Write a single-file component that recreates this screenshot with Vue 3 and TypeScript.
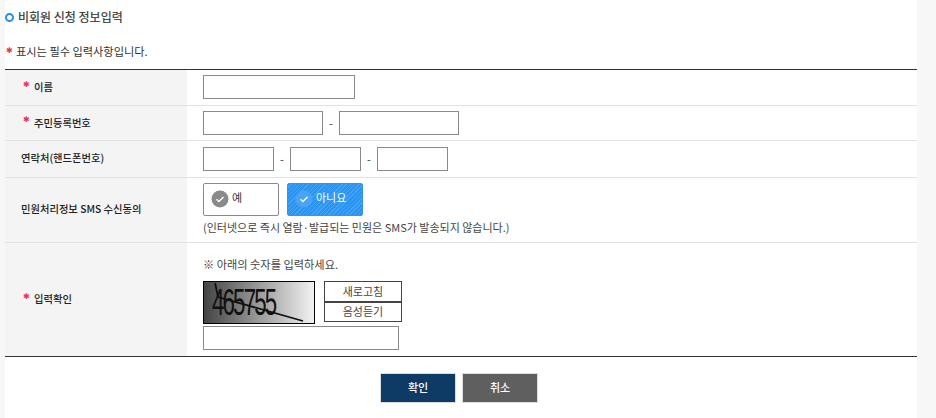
<script setup lang="ts">
const phoneParts = [0, 1, 2]
</script>

<template>
  <div class="page">
    <main class="content">
      <h2 class="title"><span class="ring"></span>비회원 신청 정보입력</h2>
      <p class="note"><span class="star">✱</span>표시는 필수 입력사항입니다.</p>
      <div class="form">
        <div class="row r1">
          <div class="label indent"><span class="star">✱</span>이름</div>
          <div class="cell"><input class="inp w152" /></div>
        </div>
        <div class="row r2">
          <div class="label indent"><span class="star">✱</span>주민등록번호</div>
          <div class="cell">
            <input class="inp w120" /><span class="dash">-</span><input class="inp w120" />
          </div>
        </div>
        <div class="row r3">
          <div class="label">연락처(핸드폰번호)</div>
          <div class="cell">
            <template v-for="p in phoneParts" :key="p">
              <span v-if="p > 0" class="dash">-</span><input class="inp w71" />
            </template>
          </div>
        </div>
        <div class="row r4">
          <div class="label">민원처리정보 SMS 수신동의</div>
          <div class="cell column">
            <div class="choices">
              <div class="choice">
                <svg width="18" height="18" viewBox="0 0 18 18"><circle cx="9" cy="9" r="8.5" fill="#8a8a8a" /><path d="M5.5 9.3l2.4 2.3 4.6-4.6" fill="none" stroke="#fff" stroke-width="1.4" /></svg>
                <span>예</span>
              </div>
              <div class="choice on">
                <svg width="18" height="18" viewBox="0 0 18 18"><circle cx="9" cy="9" r="8.5" fill="#4ba3f5" /><path d="M5.5 9.3l2.4 2.3 4.6-4.6" fill="none" stroke="#fff" stroke-width="1.4" /></svg>
                <span>아니요</span>
              </div>
            </div>
            <p class="hint">(인터넷으로 즉시 열람·발급되는 민원은 SMS가 발송되지 않습니다.)</p>
          </div>
        </div>
        <div class="row r5">
          <div class="label indent"><span class="star">✱</span>입력확인</div>
          <div class="cell column captcha-cell">
            <p class="cap-note">※ 아래의 숫자를 입력하세요.</p>
            <div class="cap-row">
              <div class="cap-img">
                <span class="cap-num">465755</span>
                <svg class="cap-line" width="110" height="41" viewBox="0 0 110 41"><path d="M11 1L14 15L99 39" fill="none" stroke="#111" stroke-width="1.8" /></svg>
              </div>
              <div class="cap-btns">
                <div class="cap-btn b1">새로고침</div>
                <div class="cap-btn b2">음성듣기</div>
              </div>
            </div>
            <input class="inp w196" />
          </div>
        </div>
      </div>
      <div class="actions">
        <div class="btn ok">확인</div>
        <div class="btn cancel">취소</div>
      </div>
    </main>
  </div>
</template>

<style>
html, body { margin: 0; background: #f7f7f7; }
</style>

<style scoped>
.page {
  width: 936px;
  height: 418px;
  overflow: hidden;
  background: #f7f7f7;
  padding-left: 5px;
  box-sizing: border-box;
  font-family: "Noto Sans CJK KR", "Noto Sans", sans-serif;
  color: #333;
}
.content {
  width: 912px;
  height: 418px;
  background: #fff;
  overflow: hidden;
}
.title {
  display: flex;
  align-items: center;
  margin: 8px 0 0;
  height: 17px;
  font-size: 12px;
  font-weight: 400;
  line-height: 17px;
  color: #333;
  -webkit-text-stroke: 0.2px #333;
}
.ring {
  border: 2px solid #2a8fe8;
  border-radius: 50%;
  width: 5px;
  height: 5px;
  margin-right: 4px;
  margin-top: 2px;
}
.note {
  margin: 18px 0 0;
  height: 16px;
  font-size: 11.2px;
  line-height: 16px;
  display: flex;
  align-items: center;
}
.star {
  color: #e8344e;
  font-size: 8px;
  width: 11px;
  flex: none;
  font-family: "DejaVu Sans", sans-serif;
  line-height: 8px;
  height: 8px;
  padding-left: 1px;
  box-sizing: border-box;
}
.label .star {
  width: 11px;
  padding-left: 0;
  margin-top: -4px;
  margin-left: -1px;
}
.form {
  margin-top: 10px;
  border-top: 1px solid #333;
  border-bottom: 1px solid #333;
}
.row {
  display: flex;
  box-sizing: border-box;
  border-bottom: 1px solid #e2e2e2;
}
.row:last-child { border-bottom: 0; }
.r1 { height: 36px; }
.r1 .cell { padding-bottom: 1px; }
.r2 { height: 35px; }
.r3 { height: 37px; }
.r4 { height: 65px; }
.r5 { height: 113px; }
.label {
  width: 182px;
  flex: none;
  background: #f4f4f4;
  display: flex;
  align-items: center;
  padding-left: 16px;
  padding-bottom: 2px;
  box-sizing: border-box;
  font-size: 10.3px;
  font-weight: 500;
  color: #222;
}
.label.indent { padding-left: 19px; }
.r3 .label { padding-bottom: 3px; }
.r4 .label { align-items: flex-start; padding-top: 23px; }
.cell {
  flex: 1;
  display: flex;
  align-items: center;
  padding-left: 16px;
}
.column { flex-direction: column; align-items: flex-start; }
.inp {
  height: 24px;
  box-sizing: border-box;
  border: 1px solid #8a8a8a;
  background: #fff;
  padding: 0;
  margin: 0;
  display: block;
}
.w152 { width: 152px; }
.w120 { width: 120px; }
.w71 { width: 71px; }
.w196 { width: 196px; }
.dash {
  width: 16px;
  text-align: center;
  font-size: 11px;
}
.choices { display: flex; gap: 8px; margin-top: 5px; }
.choice {
  width: 76px;
  height: 33px;
  box-sizing: border-box;
  border: 1px solid #8a8a8a;
  border-radius: 2px;
  display: flex;
  align-items: center;
  padding-left: 7px;
  padding-bottom: 1px;
  gap: 3px;
  font-size: 11px;
  color: #333;
}
.choice span { margin-top: -4px; }
.choice.on {
  border-color: #2f96f0;
  color: #fff;
  background: repeating-linear-gradient(135deg, #2b94f0 0 2px, #45a3f4 2px 3px);
}
.hint {
  margin: 3px 0 0;
  font-size: 11px;
  line-height: 16px;
  color: #444;
}
.captcha-cell { padding-top: 13px; }
.cap-note {
  margin: 0;
  font-size: 11.2px;
  line-height: 16px;
  color: #444;
}
.cap-row { display: flex; margin-top: 9px; gap: 9px; }
.cap-img {
  position: relative;
  width: 112px;
  height: 43px;
  box-sizing: border-box;
  border: 1px solid #000;
  background: linear-gradient(90deg, #444, #f2f2f2);
  overflow: hidden;
}
.cap-num {
  display: block;
  font-family: "Liberation Sans", sans-serif;
  font-size: 37px;
  line-height: 42px;
  margin-left: 8px;
  letter-spacing: -3px;
  color: #111;
  white-space: nowrap;
  transform: scaleX(0.6);
  transform-origin: left center;
}
.cap-line { position: absolute; left: 0; top: 0; }
.cap-btns { display: flex; flex-direction: column; }
.cap-btn {
  width: 78px;
  box-sizing: border-box;
  border: 1px solid #444;
  text-align: center;
  font-size: 11px;
  color: #444;
}
.b1 { height: 21px; line-height: 18px; }
.b2 { height: 20px; line-height: 17px; }
.captcha-cell .inp { margin-top: 2px; }
.actions {
  display: flex;
  justify-content: center;
  gap: 6px;
  margin-top: 16px;
  padding-right: 4px;
}
.btn {
  width: 76px;
  height: 30px;
  box-sizing: border-box;
  border: 1px solid #dcdcdc;
  text-align: center;
  color: #fff;
  font-size: 11px;
  line-height: 26px;
  font-weight: 500;
}
.ok { background: #0e3a66; }
.cancel { background: #5f5f5f; }
</style>
